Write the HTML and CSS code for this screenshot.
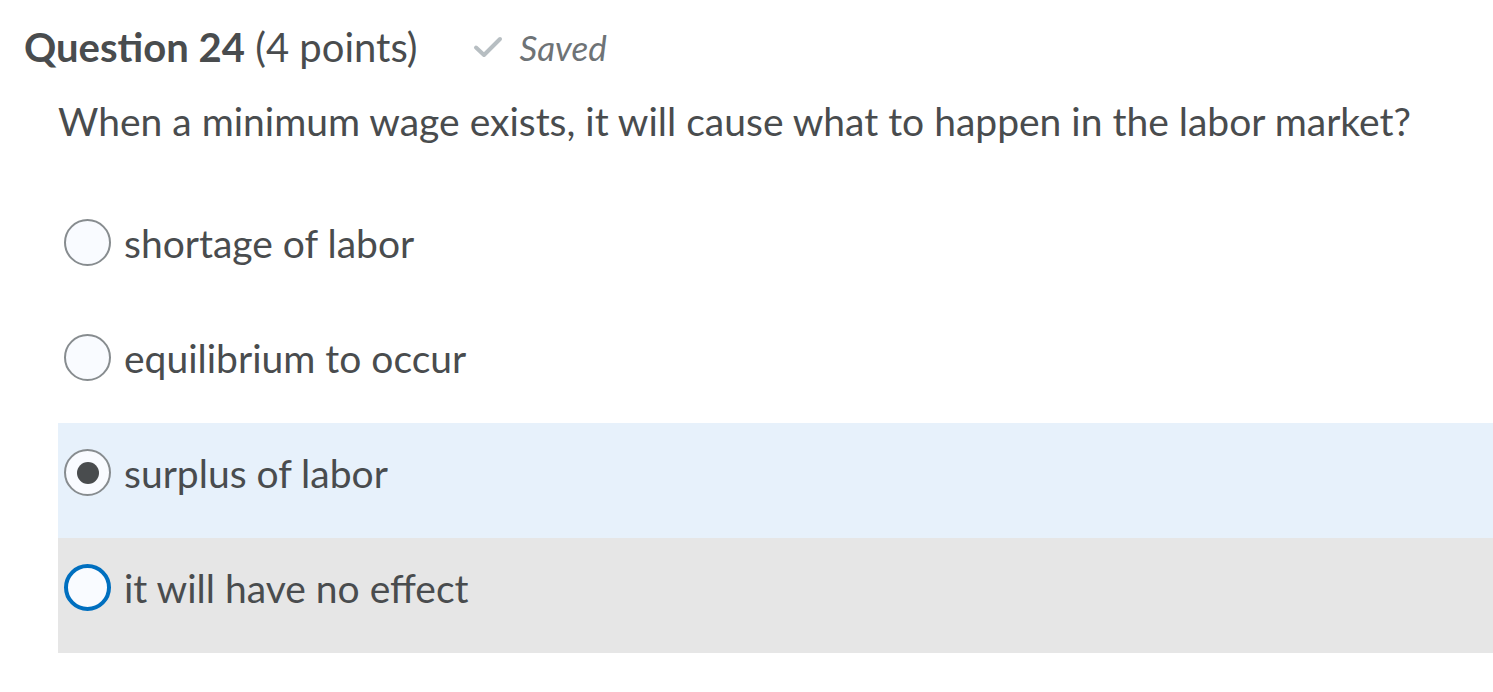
FILE: index.html
```html
<!DOCTYPE html>
<html lang="en">
<head>
<meta charset="utf-8">
<title>Question 24</title>
<link rel="stylesheet" href="styles.css">
</head>
<body>
<div class="page">
  <div class="q-header">
    <h2 class="q-title"><strong>Question 24</strong> (4 points)</h2>
    <div class="saved">
      <svg class="check" viewBox="0 0 30 22" width="30" height="22" aria-hidden="true">
        <path d="M3 11.5 L11 19 L27 3" fill="none" stroke="#b7bec2" stroke-width="4" stroke-linecap="round" stroke-linejoin="round"/>
      </svg>
      <span class="saved-text">Saved</span>
    </div>
  </div>
  <div class="q-body">
    <p class="q-text">When a minimum wage exists, it will cause what to happen in the labor market?</p>
    <div class="options">
      <label class="option">
        <span class="radio"></span>
        <span class="opt-text">shortage of labor</span>
      </label>
      <label class="option">
        <span class="radio"></span>
        <span class="opt-text">equilibrium to occur</span>
      </label>
      <label class="option selected">
        <span class="radio checked"></span>
        <span class="opt-text">surplus of labor</span>
      </label>
      <label class="option hover">
        <span class="radio focus"></span>
        <span class="opt-text">it will have no effect</span>
      </label>
    </div>
  </div>
</div>
</body>
</html>
```

FILE: styles.css
```css
html, body {
  margin: 0;
  padding: 0;
  background: #ffffff;
}
body {
  font-family: Lato, "Open Sans", sans-serif;
  color: #494c4e;
}
.page {
  padding: 24px 0 0 24px;
}
.q-header {
  display: flex;
  align-items: center;
  gap: 55px;
  height: 46px;
}
.q-title {
  margin: 0;
  font-size: 40px;
  font-weight: 400;
  line-height: 46px;
}
.q-title strong {
  font-weight: 700;
}
.saved {
  display: flex;
  align-items: center;
  gap: 17px;
}
.saved-text {
  font-style: italic;
  font-size: 35px;
  color: #6e7376;
}
.q-body {
  padding-left: 34px;
}
.q-text {
  margin: 23px 0 0 0;
  font-size: 39px;
  line-height: 56px;
}
.options {
  margin-top: 44px;
  display: flex;
  flex-direction: column;
}
.option {
  display: flex;
  align-items: center;
  gap: 13px;
  height: 115px;
  padding: 0 0 16px 6px;
  box-sizing: border-box;
}
.option.selected {
  background: #e7f1fb;
}
.option.hover {
  background: #e6e6e6;
}
.radio {
  flex: none;
  width: 47px;
  height: 47px;
  box-sizing: border-box;
  border-radius: 50%;
  border: 2px solid #878c8f;
  background: #f9fbff;
  display: flex;
  align-items: center;
  justify-content: center;
}
.radio.checked::after {
  content: "";
  width: 22px;
  height: 22px;
  border-radius: 50%;
  background: #494c4e;
}
.radio.focus {
  border: 4px solid #006fbf;
}
.opt-text {
  font-size: 39px;
  line-height: 46px;
}
```
